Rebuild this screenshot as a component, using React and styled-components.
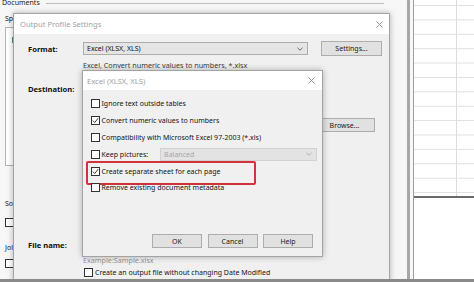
import React from "react";
import styled, { createGlobalStyle } from "styled-components";

const Global = createGlobalStyle`
  html, body { margin: 0; padding: 0; background: #fff; }
  * { box-sizing: border-box; }
`;

const Screen = styled.div`
  position: relative;
  width: 474px;
  height: 282px;
  overflow: hidden;
  display: flex;
  flex-direction: column;
  background: #f6f6f6;
  font-family: "Noto Sans", "Segoe UI", sans-serif;
  font-size: 7px;
  color: #141414;
`;

const AppBody = styled.div`
  flex: 1;
  display: flex;
  min-height: 0;
`;

const BottomFrame = styled.div`
  position: relative;
  z-index: 5;
  height: 3px;
  background: #8a8a8a;
`;

const LeftPane = styled.div`
  width: 407px;
  display: flex;
  flex-direction: column;
  padding-left: 5px;
  background: #f7f7f7;
`;

const GroupHeader = styled.div`
  display: flex;
  align-items: center;
  height: 8px;
  margin-top: -1px;
  margin-left: -3px;
  line-height: 8px;
  color: #222;
  white-space: nowrap;
`;

const GroupLine = styled.div`
  width: 338px;
  height: 1px;
  margin-left: 6px;
  background: #bdbdbd;
`;

const SideLabel = styled.div`
  height: 10px;
  line-height: 10px;
  margin-top: ${(p) => p.$mt}px;
  white-space: nowrap;
`;

const ListBox = styled.div`
  margin-top: 3px;
  width: 80px;
  height: 139px;
  border: 1px solid #b3b3b3;
  background: #fff;
  padding: 9px 0 0 6px;
`;

const TinyIcon = styled.div`
  width: 4px;
  height: 6px;
  background: #3f9a4a;
`;

const Splitter = styled.div`
  width: 6px;
  border-left: 3px solid #a7a7a7;
  background: #f8f8f8;
`;

const Sheet = styled.div`
  flex: 1;
  display: flex;
  flex-direction: column;
  border-left: 1px solid #9c9c9c;
  background: #fff;
`;

const SheetGrid = styled.div`
  height: 196px;
  background-image: linear-gradient(to right, transparent 42px, #dcdcdc 42px, #dcdcdc 43px, transparent 43px),
    linear-gradient(#e0e0e0 1px, transparent 1px);
  background-size: 100% 100%, 100% 14.4px;
  background-position: 0 0, 0 5px;
`;

const SheetRule = styled.div`
  height: 2px;
  background: #6a6a6a;
`;

const SheetRest = styled.div`
  flex: 1;
  background: #fff;
`;

/* ---------- dialogs ---------- */

const Window = styled.div`
  position: absolute;
  left: ${(p) => p.$x}px;
  top: ${(p) => p.$y}px;
  width: ${(p) => p.$w}px;
  height: ${(p) => p.$h}px;
  display: flex;
  flex-direction: column;
  border: 1px solid #a3a3a3;
  background: #f0f0f0;
  box-shadow: 0 0 6px rgba(0, 0, 0, 0.28);
  z-index: ${(p) => p.$z};
`;

const TitleBar = styled.div`
  height: ${(p) => p.$h}px;
  flex: none;
  display: flex;
  align-items: center;
  padding: 0 ${(p) => p.$pr}px 0 ${(p) => p.$pl}px;
  background: #fff;
  color: #a2a2a2;
  font-size: 7.6px;
  white-space: nowrap;
`;

const CloseBox = styled.span`
  margin-left: auto;
  display: flex;
`;

const CloseX = () => (
  <CloseBox>
    <svg width="7" height="7" viewBox="0 0 7 7">
      <path d="M0.5 0.5 L6.5 6.5 M6.5 0.5 L0.5 6.5" stroke="#8c8c8c" strokeWidth="0.9" fill="none" />
    </svg>
  </CloseBox>
);

const DialogBody = styled.div`
  flex: 1;
  display: flex;
  flex-direction: column;
  padding: ${(p) => p.$pad};
`;

const Row = styled.div`
  display: flex;
  align-items: center;
  height: ${(p) => p.$h}px;
  margin-top: ${(p) => p.$mt}px;
  margin-left: ${(p) => p.$ml || 0}px;
  white-space: nowrap;
`;

const FieldLabel = styled.div`
  width: 55px;
  flex: none;
  font-weight: 700;
  font-size: 7.6px;
  color: #111;
`;

const Hint = styled.div`
  margin-left: 55px;
  font-size: 7.2px;
  color: ${(p) => (p.$muted ? "#939393" : "#3a3a3a")};
`;

const Select = styled.div`
  width: ${(p) => p.$w}px;
  height: 13px;
  flex: none;
  display: flex;
  align-items: center;
  padding: 0 4px 0 3px;
  border: 1px solid ${(p) => (p.$disabled ? "#d2d2d2" : "#adadad")};
  background: ${(p) => (p.$disabled ? "#e3e3e3" : "#e5e5e5")};
  color: ${(p) => (p.$disabled ? "#a6a6a6" : "#111")};
`;

const Chevron = styled.span`
  margin-left: auto;
  display: flex;
`;

const Caret = ({ color }) => (
  <Chevron>
    <svg width="6" height="4" viewBox="0 0 6 4">
      <path d="M0.5 0.8 L3 3.2 L5.5 0.8" stroke={color} strokeWidth="0.9" fill="none" />
    </svg>
  </Chevron>
);

const Button = styled.div`
  width: ${(p) => p.$w}px;
  height: ${(p) => p.$h}px;
  flex: none;
  margin-left: ${(p) => p.$ml || 0}px;
  display: flex;
  align-items: center;
  justify-content: center;
  border: 1px solid #adadad;
  background: #e1e1e1;
  color: #1a1a1a;
`;

const PathField = styled.div`
  width: 227px;
  height: 13px;
  margin-left: 55px;
  border: 1px solid #adadad;
  background: #fff;
`;

const Box = styled.span`
  width: 9px;
  height: 9px;
  flex: none;
  display: flex;
  align-items: center;
  justify-content: center;
  border: 1px solid #333;
  background: #fff;
`;

const Check = ({ on }) => (
  <Box>
    {on && (
      <svg width="7" height="7" viewBox="0 0 7 7">
        <path d="M0.8 3.6 L2.7 5.5 L6.2 1.2" stroke="#222" strokeWidth="0.9" fill="none" />
      </svg>
    )}
  </Box>
);

const OptionText = styled.span`
  margin-left: ${(p) => p.$gap}px;
`;

const OptionList = styled.div`
  display: flex;
  flex-direction: column;
`;

const Option = styled.div`
  position: relative;
  height: 16.8px;
  display: flex;
  align-items: center;
  white-space: nowrap;
  &::after {
    content: "";
    display: ${(p) => (p.$highlight ? "block" : "none")};
    position: absolute;
    left: -5px;
    top: -2px;
    width: 166px;
    height: 20px;
    border: 2px solid #d0333b;
    border-radius: 2px;
  }
`;

const PicSelectWrap = styled.div`
  margin-left: 12px;
`;

const ButtonRow = styled.div`
  margin-top: auto;
  display: flex;
  justify-content: flex-end;
  gap: 5.5px;
`;

const options = [
  { text: "Ignore text outside tables", on: false },
  { text: "Convert numeric values to numbers", on: true },
  { text: "Compatibility with Microsoft Excel 97-2003 (*.xls)", on: false },
  { text: "Keep pictures:", on: false, select: true },
  { text: "Create separate sheet for each page", on: true, highlight: true },
  { text: "Remove existing document metadata", on: false },
];

export default function App() {
  return (
    <>
      <Global />
      <Screen>
        <AppBody>
          <LeftPane>
            <GroupHeader>
              Documents
              <GroupLine />
            </GroupHeader>
            <SideLabel $mt={7}>Sp</SideLabel>
            <ListBox>
              <TinyIcon />
            </ListBox>
            <SideLabel $mt={33}>So</SideLabel>
            <Row $h={9} $mt={9}>
              <Check on={false} />
            </Row>
            <SideLabel $mt={16}>Jol</SideLabel>
            <Row $h={9} $mt={6}>
              <Check on={false} />
            </Row>
          </LeftPane>
          <Splitter />
          <Sheet>
            <SheetGrid />
            <SheetRule />
            <SheetRest />
          </Sheet>
        </AppBody>
        <BottomFrame />

        <Window $x={13} $y={13} $w={377} $h={275} $z={1}>
          <TitleBar $h={20} $pl={6} $pr={6}>
            Output Profile Settings
            <CloseX />
          </TitleBar>
          <DialogBody $pad="0 0 0 14px">
            <Row $h={15} $mt={7}>
              <FieldLabel>Format:</FieldLabel>
              <Select $w={225}>
                Excel (XLSX, XLS)
                <Caret color="#555" />
              </Select>
              <Button $w={61} $h={15} $ml={13}>Settings...</Button>
            </Row>
            <Row $h={14} $mt={2}>
              <Hint>Excel, Convert numeric values to numbers, *.xlsx</Hint>
            </Row>
            <Row $h={13} $mt={10}>
              <FieldLabel>Destination:</FieldLabel>
            </Row>
            <Row $h={14} $mt={23}>
              <PathField />
              <Button $w={61} $h={14} $ml={4}>Browse...</Button>
            </Row>
            <Row $h={14} $mt={106}>
              <FieldLabel>File name:</FieldLabel>
            </Row>
            <Row $h={10} $mt={3}>
              <Hint $muted>Example:Sample.xlsx</Hint>
            </Row>
            <Row $h={9} $mt={3} $ml={56}>
              <Check on={false} />
              <OptionText $gap={2}>Create an output file without changing Date Modified</OptionText>
            </Row>
          </DialogBody>
        </Window>

        <Window $x={82} $y={70} $w={241} $h={187} $z={2}>
          <TitleBar $h={19} $pl={4} $pr={7}>
            Excel (XLSX, XLS)
            <CloseX />
          </TitleBar>
          <DialogBody $pad="5.6px 9px 8px 8px">
            <OptionList>
              {options.map((o) => (
                <Option key={o.text} $highlight={o.highlight}>
                  <Check on={o.on} />
                  <OptionText $gap={1.5}>{o.text}</OptionText>
                  {o.select && (
                    <PicSelectWrap>
                      <Select $w={157} $disabled>
                        Balanced
                        <Caret color="#b0b0b0" />
                      </Select>
                    </PicSelectWrap>
                  )}
                </Option>
              ))}
            </OptionList>
            <ButtonRow>
              <Button $w={50} $h={14}>OK</Button>
              <Button $w={50} $h={14}>Cancel</Button>
              <Button $w={50} $h={14}>Help</Button>
            </ButtonRow>
          </DialogBody>
        </Window>
      </Screen>
    </>
  );
}
